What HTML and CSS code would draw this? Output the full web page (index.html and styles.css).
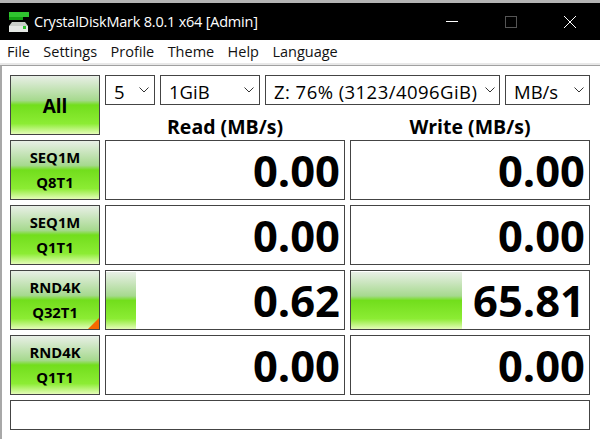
FILE: index.html
```html
<!DOCTYPE html>
<html>

<head>
    <meta charset="utf-8">
    <title>CrystalDiskMark</title>
    <link rel="stylesheet" href="styles.css">
</head>

<body>
    <div class="titlebar">
        <svg class="appicon" width="20" height="20" viewBox="0 0 20 20">
            <rect x="0" y="0" width="20" height="5" fill="#2fc42f" />
            <rect x="0" y="5" width="14" height="3" fill="#14a014" />
            <path d="M3 10h13l3 4v6H0v-6z" fill="#c9cfc9" />
            <rect x="0" y="14" width="19" height="6" fill="#e4e8e4" />
            <rect x="14" y="14" width="3" height="3" fill="#2fc42f" />
        </svg>
        <span class="title">CrystalDiskMark 8.0.1 x64 [Admin]</span>
        <div class="wincontrols">
            <svg width="12" height="12" viewBox="0 0 12 12"><path d="M0 5.5h12" stroke="#fff" fill="none" /></svg>
            <svg width="12" height="12" viewBox="0 0 12 12"><rect x="0.5" y="0.5" width="11" height="11" stroke="#555" fill="none" /></svg>
            <svg width="12" height="12" viewBox="0 0 12 12"><path d="M0 0l12 12M12 0L0 12" stroke="#fff" fill="none" /></svg>
        </div>
    </div>

    <div class="menubar">
        <span>File</span>
        <span>Settings</span>
        <span>Profile</span>
        <span>Theme</span>
        <span>Help</span>
        <span>Language</span>
    </div>

    <div class="content">
        <div class="btn btn-all">All</div>
        <div class="top">
            <div class="selects">
                <div class="sel sel-count">5<svg class="chev" width="10" height="6" viewBox="0 0 10 6"><path d="M0.5 0.5l4.5 4.5 4.5-4.5" /></svg></div>
                <div class="sel sel-size">1GiB<svg class="chev" width="10" height="6" viewBox="0 0 10 6"><path d="M0.5 0.5l4.5 4.5 4.5-4.5" /></svg></div>
                <div class="sel sel-drive">Z: 76% (3123/4096GiB)<svg class="chev" width="10" height="6" viewBox="0 0 10 6"><path d="M0.5 0.5l4.5 4.5 4.5-4.5" /></svg></div>
                <div class="sel sel-unit">MB/s<svg class="chev" width="10" height="6" viewBox="0 0 10 6"><path d="M0.5 0.5l4.5 4.5 4.5-4.5" /></svg></div>
            </div>
            <div class="heads">
                <div>Read (MB/s)</div>
                <div>Write (MB/s)</div>
            </div>
        </div>

        <div class="btn">SEQ1M<br>Q8T1</div>
        <div class="cell">0.00</div>
        <div class="cell">0.00</div>

        <div class="btn">SEQ1M<br>Q1T1</div>
        <div class="cell">0.00</div>
        <div class="cell">0.00</div>

        <div class="btn btn-flag">RND4K<br>Q32T1</div>
        <div class="cell"><div class="bar" style="width:30px"></div><span class="val">0.62</span></div>
        <div class="cell"><div class="bar" style="width:111px"></div><span class="val">65.81</span></div>

        <div class="btn">RND4K<br>Q1T1</div>
        <div class="cell">0.00</div>
        <div class="cell">0.00</div>

        <div class="status"></div>
    </div>
</body>

</html>
```

FILE: styles.css
```css
html,
body {
    margin: 0;
    height: 100%;
    overflow: hidden;
}

body {
    background: white;
    font-family: 'Open Sans', 'Noto Sans', sans-serif;
    border-top: 3px solid #b4b4b4;
    box-sizing: border-box;
}

.titlebar {
    height: 37px;
    background: black;
    color: white;
    display: flex;
    align-items: center;
    padding-left: 9px;
    font-size: 14.5px;
}

.title {
    margin-left: 5px;
    letter-spacing: -0.22px;
}

.wincontrols {
    margin-left: auto;
    display: flex;
    gap: 47px;
    padding-right: 24px;
}

.menubar {
    height: 23px;
    display: flex;
    align-items: center;
    padding-left: 7px;
    gap: 13.4px;
    font-size: 14.5px;
    color: #111;
    border-bottom: 2px solid #e8e8e8;
}

.content {
    height: 374px;
    box-sizing: border-box;
    border-top: 1px solid #a0a0a0;
    border-left: 2px solid #a8a8a8;
    padding: 9px 0 0 8px;
    display: grid;
    grid-template-columns: 90px 240px 240px;
    grid-template-rows: 60px repeat(4, 60px) 30px;
    gap: 5px;
}

.btn {
    box-sizing: border-box;
    border: 1px solid #444;
    background: linear-gradient(#e8efe6 0%, #a6d98e 42%, #72de1c 50%, #8cec34 82%, #e4fcb8 100%);
    display: flex;
    align-items: center;
    justify-content: center;
    text-align: center;
    font-size: 14.8px;
    font-weight: 700;
    line-height: 25px;
    color: black;
    position: relative;
}

.btn-all {
    font-size: 19px;
    padding-top: 3px;
}

.btn-flag::after {
    content: "";
    position: absolute;
    right: 0;
    bottom: 0;
    border-style: solid;
    border-width: 0 0 11px 11px;
    border-color: transparent transparent #f46a00 transparent;
}

.top {
    grid-column: 2 / 4;
}

.selects {
    display: flex;
    gap: 5px;
    height: 30px;
}

.sel {
    box-sizing: border-box;
    height: 30px;
    border: 1px solid #444;
    display: flex;
    align-items: center;
    justify-content: space-between;
    padding: 3px 5px 0 8px;
    font-size: 18.5px;
    color: black;
}

.sel-count {
    width: 50px;
}

.sel-size {
    width: 100px;
}

.sel-drive {
    width: 235px;
    padding-right: 4px;
    white-space: nowrap;
    letter-spacing: 0.45px;
}

.sel-unit {
    width: 85px;
}

.chev {
    fill: none;
    stroke: #333;
    flex: none;
    margin-top: -3px;
}

.heads {
    display: grid;
    grid-template-columns: 240px 240px;
    gap: 5px;
    height: 30px;
    text-align: center;
    font-size: 19.5px;
    font-weight: 700;
    line-height: 30px;
    padding-top: 7px;
    box-sizing: border-box;
}

.cell {
    box-sizing: border-box;
    border: 1px solid #444;
    display: flex;
    align-items: center;
    justify-content: flex-end;
    padding-right: 4px;
    font-size: 43.5px;
    font-weight: 700;
    color: black;
    position: relative;
}

.bar {
    position: absolute;
    left: 0;
    top: 1px;
    bottom: 0;
    background: linear-gradient(#e8efe6 0%, #a6d98e 42%, #72de1c 50%, #8cec34 82%, #e4fcb8 100%);
}

.val {
    position: relative;
}

.status {
    grid-column: 1 / 4;
    border: 1px solid #444;
}
```
